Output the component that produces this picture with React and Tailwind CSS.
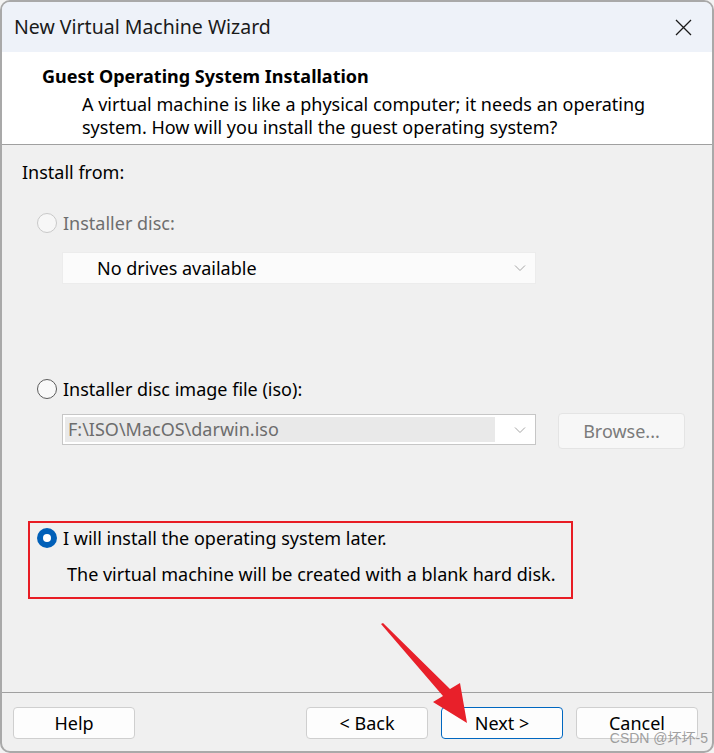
import React from "react";

const font = { fontFamily: '"Noto Sans", "Noto Sans CJK SC", sans-serif' };

function Radio({ state }) {
  if (state === "checked") {
    return (
      <span className="w-[20px] h-[20px] rounded-full bg-[#005fb8] flex items-center justify-center shrink-0">
        <span className="w-[8px] h-[8px] rounded-full bg-white" />
      </span>
    );
  }
  if (state === "disabled") {
    return <span className="w-[20px] h-[20px] rounded-full border border-[#c9c9c9] bg-[#f7f7f7] shrink-0" />;
  }
  return <span className="w-[20px] h-[20px] rounded-full border border-[#5c5c5c] bg-[#f9f9f9] shrink-0" />;
}

function Chevron() {
  return (
    <svg width="12" height="8" viewBox="0 0 12 8" className="shrink-0">
      <path d="M1 1.5 L6 6.5 L11 1.5" fill="none" stroke="#a5a5a5" strokeWidth="1" />
    </svg>
  );
}

function Btn({ children, primary }) {
  return (
    <button
      className={
        "w-[122px] h-[32px] rounded-[4px] bg-[#fdfdfd] text-[18px] text-black flex items-center justify-center " +
        (primary ? "border border-[#0067c0]" : "border border-[#cfcfcf]")
      }
    >
      {children}
    </button>
  );
}

export default function App() {
  return (
    <div className="w-[714px] h-[753px] bg-[#f3f3f3] text-black" style={font}>
      <div className="relative w-full h-full rounded-[10px] border-2 border-[#a9a9a9] overflow-hidden flex flex-col bg-[#f0f0f0]">
        {/* title bar */}
        <div className="h-[50px] bg-[#eef2f9] flex items-center justify-between pl-[12px] pr-[20px] shrink-0">
          <span className="text-[19.5px] leading-none text-[#1a1a1a]">New Virtual Machine Wizard</span>
          <svg width="17" height="17" viewBox="0 0 17 17">
            <path d="M1 1 L16 16 M16 1 L1 16" stroke="#1a1a1a" strokeWidth="1.3" />
          </svg>
        </div>

        {/* header */}
        <div className="h-[93px] bg-white border-b border-[#a0a0a0] pl-[40px] pt-[13px] shrink-0">
          <div className="text-[18px] leading-[23px] font-bold">Guest Operating System Installation</div>
          <div className="mt-[5px] pl-[40px] text-[18px] leading-[23px] pr-[40px]">
            A virtual machine is like a physical computer; it needs an operating system. How will you install the guest operating system?
          </div>
        </div>

        {/* body */}
        <div className="flex-1 pl-[20px] pt-[16px] flex flex-col">
          <div className="text-[18px] leading-[23px]">Install from:</div>

          <div className="mt-[28px] ml-[15px] h-[22px] flex items-center gap-[6px]">
            <Radio state="disabled" />
            <span className="text-[18px] text-[#6e6e6e]">Installer disc:</span>
          </div>

          <div className="mt-[18px] ml-[40px] w-[474px] h-[32px] bg-[#fbfbfb] border border-[#ececec] flex items-center justify-between pl-[34px] pr-[9px]">
            <span className="text-[18px]">No drives available</span>
            <Chevron />
          </div>

          <div className="mt-[94px] ml-[15px] h-[22px] flex items-center gap-[6px]">
            <Radio state="off" />
            <span className="text-[18px]">Installer disc image file (iso):</span>
          </div>

          <div className="mt-[13px] ml-[40px] flex items-start gap-[22px]">
            <div className="mt-[1px] w-[474px] h-[31px] bg-white border border-[#c6c6c6] flex items-center p-[2px] pr-[9px]">
              <div className="flex-1 h-full bg-[#e9e9e9] flex items-center pl-[3px]">
                <span className="text-[18px] text-[#6d6d6d]">F:\ISO\MacOS\darwin.iso</span>
              </div>
              <div className="w-[31px] flex justify-end">
                <Chevron />
              </div>
            </div>
            <div className="w-[127px] h-[36px] rounded-[4px] bg-[#f7f7f7] border border-[#e4e4e4] flex items-center justify-center text-[18px] text-[#7b7b7b]">
              Browse...
            </div>
          </div>

          <div className="mt-[72px] ml-[6px] w-[545px] h-[78px] border-2 border-[#e81c24] pl-[7px] pt-[4px]">
            <div className="h-[22px] flex items-center gap-[6px]">
              <Radio state="checked" />
              <span className="text-[18px]">I will install the operating system later.</span>
            </div>
            <div className="mt-[14px] pl-[30px] text-[18px] leading-[22px]">
              The virtual machine will be created with a blank hard disk.
            </div>
          </div>
        </div>

        {/* footer */}
        <div className="h-[59px] border-t border-[#a0a0a0] flex items-center justify-between pl-[11px] pr-[14px] shrink-0 pt-[2px]">
          <Btn>Help</Btn>
          <div className="flex gap-[13px]">
            <Btn>&lt; Back</Btn>
            <Btn primary>Next &gt;</Btn>
            <Btn>Cancel</Btn>
          </div>
        </div>

        {/* red annotation arrow */}
        <svg className="absolute left-0 top-0 pointer-events-none" width="714" height="753" viewBox="0 0 714 753">
          <polygon
            points="379,622 381,621 448,687 458,681 465,721 431,700 441,694"
            fill="#e8202a"
          />
        </svg>

        {/* watermark */}
        <span
          className="absolute right-[4px] bottom-[2px] text-[14px] text-[#8a8a8a] opacity-80"
          style={{ fontFamily: '"Liberation Sans", "Noto Sans CJK SC", sans-serif' }}
        >
          CSDN @坏坏-5
        </span>
      </div>
    </div>
  );
}
